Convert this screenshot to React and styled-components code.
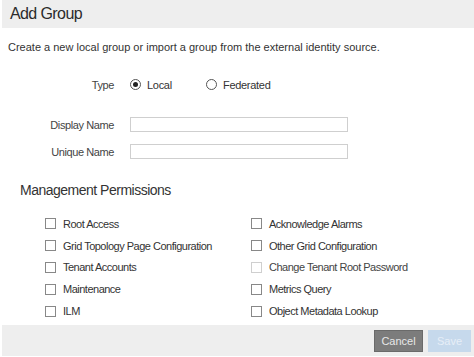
import React from "react";
import styled, { createGlobalStyle } from "styled-components";

const Global = createGlobalStyle`
  html, body { margin: 0; padding: 0; background: #fff; }
  body { font-family: "Liberation Sans", Arial, sans-serif; color: #333; }
`;

const Dialog = styled.div`
  width: 474px;
  height: 357px;
  display: flex;
  flex-direction: column;
  padding-left: 2px;
  box-sizing: border-box;
  overflow: hidden;
`;

const Header = styled.div`
  height: 28px;
  background: #eeeeee;
  display: flex;
  align-items: center;
  padding-left: 8px;
  font-size: 16px;
  letter-spacing: -0.6px;
  color: #2b2b2b;
`;

const Body = styled.div`
  flex: 1;
  padding: 0 0 0 6px;
`;

const Intro = styled.p`
  margin: 13px 0 0;
  font-size: 11px;
  line-height: 13px;
  color: #333;
`;

const FormRow = styled.div`
  display: flex;
  align-items: center;
  margin-top: ${(p) => p.$mt}px;
  height: 15px;
`;

const Label = styled.label`
  width: 106px;
  text-align: right;
  font-size: 11px;
  letter-spacing: -0.4px;
  color: #444;
  padding-right: 16px;
  box-sizing: content-box;
`;

const RadioGroup = styled.div`
  display: flex;
  align-items: center;
`;

const RadioItem = styled.label`
  display: flex;
  align-items: center;
  font-size: 11px;
  letter-spacing: -0.3px;
  color: #333;
  width: ${(p) => p.$w}px;
`;

const RadioCircle = styled.span`
  width: 9px;
  height: 9px;
  border: 1px solid #555;
  border-radius: 50%;
  display: inline-flex;
  align-items: center;
  justify-content: center;
  margin-right: 6px;
  &::after {
    content: "";
    width: 5px;
    height: 5px;
    border-radius: 50%;
    background: ${(p) => (p.$checked ? "#222" : "transparent")};
  }
`;

const TextInput = styled.input`
  width: 218px;
  height: 15px;
  box-sizing: border-box;
  border: 1px solid #cfcfcf;
  padding: 0 4px;
  font-size: 11px;
  outline: none;
`;

const SectionTitle = styled.h2`
  margin: 23px 0 0 12px;
  font-size: 14px;
  letter-spacing: -0.5px;
  font-weight: normal;
  color: #333;
  line-height: 16px;
`;

const PermGrid = styled.div`
  display: grid;
  grid-template-columns: 206px 200px;
  grid-auto-rows: 21.8px;
  margin: 15px 0 0 37px;
`;

const PermItem = styled.label`
  display: flex;
  align-items: center;
  font-size: 11px;
  letter-spacing: -0.5px;
  color: ${(p) => (p.$disabled ? "#444" : "#333")};
`;

const Box = styled.span`
  width: 9px;
  height: 9px;
  border: 1px solid ${(p) => (p.$disabled ? "#cfcfcf" : "#888")};
  margin-right: 7px;
  flex: none;
`;

const Footer = styled.div`
  height: 31px;
  background: #eeeeee;
  display: flex;
  justify-content: flex-end;
  align-items: center;
  gap: 5px;
  padding-right: 3px;
  margin-bottom: 1px;
`;

const Button = styled.button`
  height: 22px;
  padding: 0;
  width: ${(p) => p.$w}px;
  font-family: "Liberation Sans", Arial, sans-serif;
  font-size: 11px;
  background: ${(p) => (p.$primary ? "#c6d9ec" : "#7c7c7c")};
  color: ${(p) => (p.$primary ? "#e6eef7" : "#e8e8e8")};
  border: 1px solid ${(p) => (p.$primary ? "#c6d9ec" : "#6a6a6a")};
`;

const left = [
  "Root Access",
  "Grid Topology Page Configuration",
  "Tenant Accounts",
  "Maintenance",
  "ILM",
];
const right = [
  "Acknowledge Alarms",
  "Other Grid Configuration",
  "Change Tenant Root Password",
  "Metrics Query",
  "Object Metadata Lookup",
];

export default function App() {
  const items = [];
  for (let i = 0; i < left.length; i++) {
    items.push(
      <PermItem key={"l" + i}>
        <Box />
        {left[i]}
      </PermItem>
    );
    items.push(
      <PermItem key={"r" + i} $disabled={i === 2}>
        <Box $disabled={i === 2} />
        {right[i]}
      </PermItem>
    );
  }
  return (
    <>
      <Global />
      <Dialog>
        <Header>Add Group</Header>
        <Body>
          <Intro>
            Create a new local group or import a group from the external
            identity source.
          </Intro>
          <FormRow $mt={23}>
            <Label>Type</Label>
            <RadioGroup>
              <RadioItem $w={76}>
                <RadioCircle $checked />
                Local
              </RadioItem>
              <RadioItem $w={100}>
                <RadioCircle />
                Federated
              </RadioItem>
            </RadioGroup>
          </FormRow>
          <FormRow $mt={25}>
            <Label>Display Name</Label>
            <TextInput />
          </FormRow>
          <FormRow $mt={12}>
            <Label>Unique Name</Label>
            <TextInput />
          </FormRow>
          <SectionTitle>Management Permissions</SectionTitle>
          <PermGrid>{items}</PermGrid>
        </Body>
        <Footer>
          <Button $w={49}>Cancel</Button>
          <Button $w={43} $primary>
            Save
          </Button>
        </Footer>
      </Dialog>
    </>
  );
}
